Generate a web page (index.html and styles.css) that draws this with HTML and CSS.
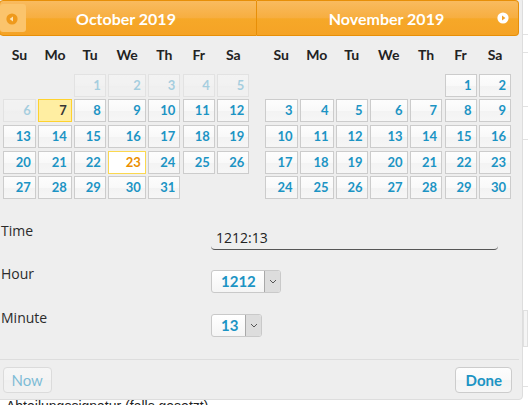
FILE: index.html
```html
<!DOCTYPE html>
<html lang="en">
<head>
    <meta charset="UTF-8">
    <title>Datepicker</title>
    <link rel="stylesheet" href="styles.css">
</head>
<body>
    <div class="page">
        <div class="rule r1"></div>
        <div class="rule r2"></div>
        <div class="rule r3"></div>
        <div class="rule r4"></div>
        <div class="spacer"></div>
        <div class="box"></div>
        <div class="rule r5"></div>
        <p class="page-label">Abteilungssignatur (falls gesetzt)</p>
    </div>

    <div class="datepicker">
        <div class="groups">
            <div class="group group-first">
                <div class="head">
                    <a class="prev">
                        <svg width="12" height="12" viewBox="0 0 12 12"><circle cx="6" cy="6" r="5.6" fill="#ef9a1c"/><polygon points="3.6,6 7,3.6 7,8.4" fill="#fde3b6"/></svg>
                    </a>
                    <span class="title">October 2019</span>
                </div>
                <div class="cal">
                    <span class="dow">Su</span><span class="dow">Mo</span><span class="dow">Tu</span><span class="dow">We</span><span class="dow">Th</span><span class="dow">Fr</span><span class="dow">Sa</span>
                    <span></span><span></span>
                    <span class="day off">1</span><span class="day off">2</span><span class="day off">3</span><span class="day off">4</span><span class="day off">5</span>
                    <span class="day off">6</span><span class="day today">7</span><span class="day">8</span><span class="day">9</span><span class="day">10</span><span class="day">11</span><span class="day">12</span>
                    <span class="day">13</span><span class="day">14</span><span class="day">15</span><span class="day">16</span><span class="day">17</span><span class="day">18</span><span class="day">19</span>
                    <span class="day">20</span><span class="day">21</span><span class="day">22</span><span class="day active">23</span><span class="day">24</span><span class="day">25</span><span class="day">26</span>
                    <span class="day">27</span><span class="day">28</span><span class="day">29</span><span class="day">30</span><span class="day">31</span>
                </div>
            </div>
            <div class="group group-last">
                <div class="head">
                    <span class="title">November 2019</span>
                    <a class="next">
                        <svg width="12" height="12" viewBox="0 0 12 12"><circle cx="6" cy="6" r="5.6" fill="#ffffff"/><polygon points="8.4,6 5,3.6 5,8.4" fill="#f3a12a"/></svg>
                    </a>
                </div>
                <div class="cal">
                    <span class="dow">Su</span><span class="dow">Mo</span><span class="dow">Tu</span><span class="dow">We</span><span class="dow">Th</span><span class="dow">Fr</span><span class="dow">Sa</span>
                    <span></span><span></span><span></span><span></span><span></span>
                    <span class="day">1</span><span class="day">2</span>
                    <span class="day">3</span><span class="day">4</span><span class="day">5</span><span class="day">6</span><span class="day">7</span><span class="day">8</span><span class="day">9</span>
                    <span class="day">10</span><span class="day">11</span><span class="day">12</span><span class="day">13</span><span class="day">14</span><span class="day">15</span><span class="day">16</span>
                    <span class="day">17</span><span class="day">18</span><span class="day">19</span><span class="day">20</span><span class="day">21</span><span class="day">22</span><span class="day">23</span>
                    <span class="day">24</span><span class="day">25</span><span class="day">26</span><span class="day">27</span><span class="day">28</span><span class="day">29</span><span class="day">30</span>
                </div>
            </div>
        </div>

        <div class="time">
            <div class="trow trow-time">
                <label>Time</label>
                <div class="tinput">1212:13</div>
            </div>
            <div class="trow trow-hour">
                <label>Hour</label>
                <div class="sel sel-hour">
                    <span class="sel-val">1212</span>
                    <span class="sel-arrow"><svg width="8" height="5" viewBox="0 0 8 5"><path d="M1 1 L4 4 L7 1" fill="none" stroke="#555" stroke-width="1"/></svg></span>
                </div>
            </div>
            <div class="trow trow-minute">
                <label>Minute</label>
                <div class="sel sel-minute">
                    <span class="sel-val">13</span>
                    <span class="sel-arrow"><svg width="8" height="5" viewBox="0 0 8 5"><path d="M1 1 L4 4 L7 1" fill="none" stroke="#555" stroke-width="1"/></svg></span>
                </div>
            </div>
        </div>

        <div class="pane">
            <button class="btn btn-now">Now</button>
            <button class="btn btn-done">Done</button>
        </div>
    </div>
</body>
</html>
```

FILE: styles.css
```css
body
{
    margin: 0;
    background: #ffffff;
    font-family: "Open Sans", sans-serif;
}

/* page behind the popup */
.rule
{
    border-bottom: 1px solid #e2e2e2;
}
.r1
{
    height: 34px;
}
.r2
{
    height: 17px;
}
.r3
{
    height: 53px;
}
.r4
{
    height: 32px;
}
.spacer
{
    height: 170px;
}
.box
{
    height: 35px;
    margin-left: 523px;
    border: 1px solid #e0e0e0;
    background: #f5f5f5;
}
.r5
{
    height: 39px;
}
.page-label
{
    margin: 11px 0 0 6px;
    font-family: "Liberation Sans", Arial, sans-serif;
    font-size: 14px;
    line-height: 16px;
    color: #222222;
}

/* datepicker */
.datepicker
{
    position: absolute;
    left: -4px;
    top: -3px;
    width: 520px;
    padding: 2px 3px 0 2px;
    border: 1px solid #dddddd;
    border-radius: 4px;
    background: #eeeeee;
    color: #333333;
}
.groups
{
    display: flex;
}
.group-first
{
    width: 258px;
}
.group-last
{
    width: 262px;
}
.head
{
    position: relative;
    height: 34px;
    border: 1px solid #e78f08;
    background: linear-gradient(#f9bb5f, #f7ae40 50%, #f6a828 52%, #f5a326);
    color: #ffffff;
    font-family: Lato, sans-serif;
    font-weight: bold;
    font-size: 16px;
    line-height: 35px;
    text-align: center;
}
.group-first .head
{
    border-radius: 4px 0 0 4px;
    padding-right: 4px;
}
.group-last .head
{
    border-left: 0;
    border-radius: 0 4px 4px 0;
    padding-right: 2px;
}
.prev
{
    position: absolute;
    left: 0;
    top: 3px;
    width: 26px;
    height: 28px;
    border-radius: 3px;
    background: #fbc46c;
    display: flex;
    align-items: center;
    justify-content: center;
}
.prev svg
{
    margin: 1px 2px 0 0;
}
.next
{
    position: absolute;
    right: 9px;
    top: 11px;
    width: 12px;
    height: 12px;
    display: flex;
}
.cal
{
    display: grid;
    grid-template-columns: 32.5px 33.5px 31.5px 37.5px 32px 32px 32px;
    grid-template-rows: 33px repeat(5, 23px);
    column-gap: 2.5px;
    row-gap: 2.67px;
    margin-top: 2px;
    font-family: Lato, sans-serif;
    font-weight: bold;
}
.group-first .cal
{
    margin-left: 4.3px;
}
.group-last .cal
{
    margin-left: 8px;
}
.dow
{
    font-size: 14px;
    line-height: 33px;
    text-align: center;
    color: #222222;
}
.day
{
    display: block;
    border: 1px solid #cccccc;
    background: linear-gradient(#fdfdfd, #f9f9f9 50%, #f3f3f3 52%, #f6f6f6);
    color: #1c94c4;
    font-size: 13px;
    line-height: 20px;
    padding-right: 4px;
    text-align: right;
}
.day.off
{
    opacity: 0.35;
}
.day.today
{
    border-color: #fed22f;
    background: #ffeea2;
    color: #363636;
}
.day.active
{
    border-color: #fbd850;
    background: #ffffff;
    color: #eb8f00;
}

/* time part */
.time
{
    margin-top: 21.6px;
}
.trow
{
    display: grid;
    grid-template-columns: 212px auto;
    align-items: start;
}
.trow label
{
    padding-left: 2px;
    font-size: 14px;
    line-height: 19px;
    color: #2b2b2b;
}
.trow-time
{
    height: 43px;
}
.trow-hour
{
    height: 44px;
}
.trow-minute
{
    height: 51px;
}
.tinput
{
    box-sizing: border-box;
    width: 287px;
    height: 22px;
    margin-top: 7px;
    padding-left: 5px;
    border-bottom: 1px solid #555555;
    border-radius: 0 0 4px 4px;
    font-size: 14px;
    line-height: 20px;
    color: #222222;
}
.sel
{
    display: flex;
    justify-self: start;
    margin-top: 6px;
    height: 21px;
    border: 1px solid #c9c9c9;
    border-radius: 3px;
    background: linear-gradient(#ffffff, #f5f5f5);
    overflow: hidden;
}
.sel-val
{
    box-sizing: border-box;
    padding-left: 9px;
    font-family: Lato, sans-serif;
    font-weight: bold;
    font-size: 15px;
    line-height: 21px;
    color: #1c94c4;
}
.sel-hour .sel-val
{
    width: 52px;
}
.sel-minute .sel-val
{
    width: 33px;
}
.sel-arrow
{
    width: 15px;
    border-left: 1px solid #a9a9a9;
    background: #dddddd;
    display: flex;
    align-items: center;
    justify-content: center;
}

/* buttons */
.pane
{
    display: flex;
    justify-content: space-between;
    border-top: 1px solid #dddddd;
    padding: 7px 6.7px 6px 3.7px;
}
.btn
{
    height: 26px;
    padding: 0;
    border: 1px solid #cccccc;
    border-radius: 4px;
    background: linear-gradient(#fdfdfd, #f9f9f9 50%, #f3f3f3 52%, #f6f6f6);
    color: #1c94c4;
    font-family: Lato, sans-serif;
    font-size: 15px;
}
.btn-now
{
    width: 49px;
    opacity: 0.55;
}
.btn-done
{
    width: 57px;
    font-weight: bold;
}
```
